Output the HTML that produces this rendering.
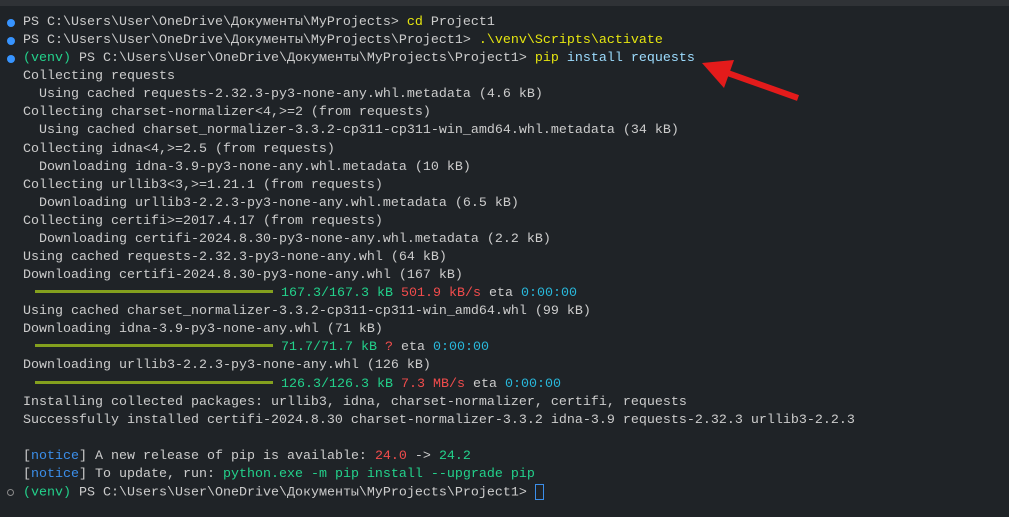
<!DOCTYPE html>
<html><head><meta charset="utf-8"><style>
html,body{margin:0;padding:0;}
body{width:1009px;height:517px;background:#1f2327;overflow:hidden;position:relative;font-family:"Liberation Mono",monospace;font-size:13.33px;color:#cccccc;}
.top{position:absolute;left:0;top:0;width:1009px;height:6px;background:#2f3236;}
.t{position:absolute;left:23px;top:14px;line-height:18.08px;}
.l{height:18.08px;position:relative;white-space:pre;}
.g{color:#23d18b}.y{color:#e5e510}.r{color:#f14c4c}.c{color:#29b8db}.b{color:#3b8eea}.lb{color:#9cdcfe}
.dot{position:absolute;left:-16px;top:5px;width:8px;height:8px;border-radius:50%;background:#3794ff;}
.hol{position:absolute;left:-16px;top:5px;width:5px;height:5px;border-radius:50%;border:1.5px solid #8a8a8a;}
.bar{display:inline-block;width:238px;height:3px;background:#84a01e;vertical-align:middle;margin-left:12px;margin-right:8px;position:relative;top:-1px}
.cur{display:inline-block;width:7px;height:14px;border:1px solid #3b8eea;vertical-align:middle;}
</style></head><body>
<div class="top"></div>
<div class="t"><div class="l"><span class="dot"></span>PS C:\Users\User\OneDrive\Документы\MyProjects&gt; <span class="y">cd</span> Project1</div><div class="l"><span class="dot"></span>PS C:\Users\User\OneDrive\Документы\MyProjects\Project1&gt; <span class="y">.\venv\Scripts\activate</span></div><div class="l"><span class="dot"></span><span class="g">(venv)</span> PS C:\Users\User\OneDrive\Документы\MyProjects\Project1&gt; <span class="y">pip</span> <span class="lb">install requests</span></div><div class="l">Collecting requests</div><div class="l">  Using cached requests-2.32.3-py3-none-any.whl.metadata (4.6 kB)</div><div class="l">Collecting charset-normalizer&lt;4,&gt;=2 (from requests)</div><div class="l">  Using cached charset_normalizer-3.3.2-cp311-cp311-win_amd64.whl.metadata (34 kB)</div><div class="l">Collecting idna&lt;4,&gt;=2.5 (from requests)</div><div class="l">  Downloading idna-3.9-py3-none-any.whl.metadata (10 kB)</div><div class="l">Collecting urllib3&lt;3,&gt;=1.21.1 (from requests)</div><div class="l">  Downloading urllib3-2.2.3-py3-none-any.whl.metadata (6.5 kB)</div><div class="l">Collecting certifi&gt;=2017.4.17 (from requests)</div><div class="l">  Downloading certifi-2024.8.30-py3-none-any.whl.metadata (2.2 kB)</div><div class="l">Using cached requests-2.32.3-py3-none-any.whl (64 kB)</div><div class="l">Downloading certifi-2024.8.30-py3-none-any.whl (167 kB)</div><div class="l"><span class="bar"></span><span class="g">167.3/167.3 kB</span> <span class="r">501.9 kB/s</span> eta <span class="c">0:00:00</span></div><div class="l">Using cached charset_normalizer-3.3.2-cp311-cp311-win_amd64.whl (99 kB)</div><div class="l">Downloading idna-3.9-py3-none-any.whl (71 kB)</div><div class="l"><span class="bar"></span><span class="g">71.7/71.7 kB</span> <span class="r">?</span> eta <span class="c">0:00:00</span></div><div class="l">Downloading urllib3-2.2.3-py3-none-any.whl (126 kB)</div><div class="l"><span class="bar"></span><span class="g">126.3/126.3 kB</span> <span class="r">7.3 MB/s</span> eta <span class="c">0:00:00</span></div><div class="l">Installing collected packages: urllib3, idna, charset-normalizer, certifi, requests</div><div class="l">Successfully installed certifi-2024.8.30 charset-normalizer-3.3.2 idna-3.9 requests-2.32.3 urllib3-2.2.3</div><div class="l"></div><div class="l">[<span class="b">notice</span>] A new release of pip is available: <span class="r">24.0</span> -&gt; <span class="g">24.2</span></div><div class="l">[<span class="b">notice</span>] To update, run: <span class="g">python.exe -m pip install --upgrade pip</span></div><div class="l"><span class="hol"></span><span class="g">(venv)</span> PS C:\Users\User\OneDrive\Документы\MyProjects\Project1&gt; <span class="cur"></span></div></div>
<svg style="position:absolute;left:0;top:0" width="1009" height="517">
<line x1="798" y1="98" x2="722" y2="71" stroke="#e31b1b" stroke-width="6"/>
<polygon points="702,63 734,60 724,88" fill="#e31b1b"/>
</svg>
</body></html>
